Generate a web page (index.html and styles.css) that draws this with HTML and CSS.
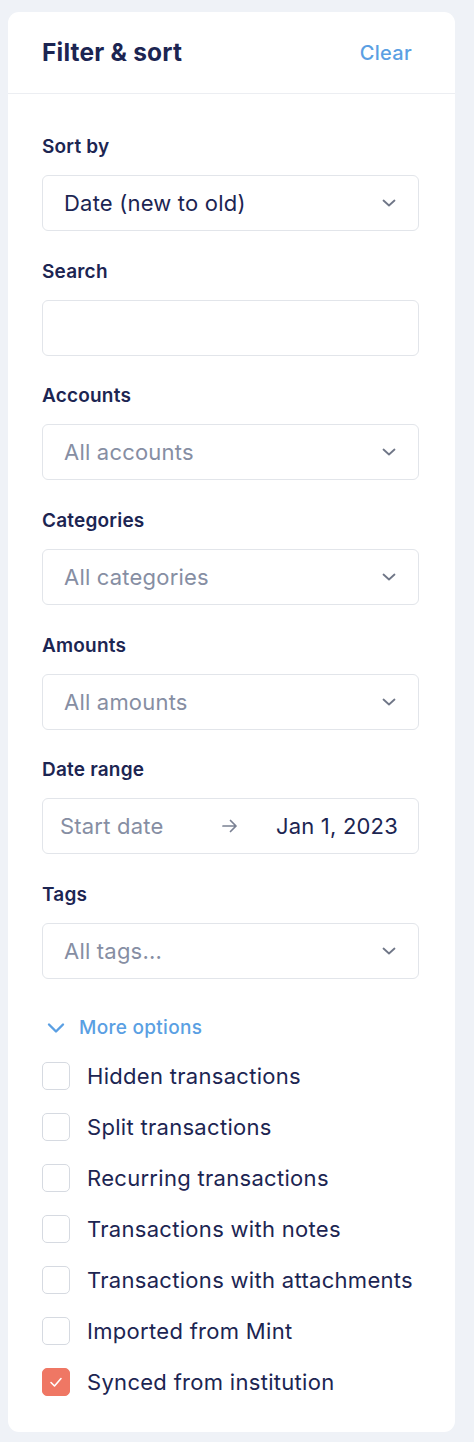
FILE: index.html
```html
<!DOCTYPE html>
<html>
<head>
<meta charset="utf-8">
<link rel="stylesheet" href="styles.css">
</head>
<body>
<div class="card">
  <div class="header">
    <div class="title">Filter &amp; sort</div>
    <div class="clear">Clear</div>
  </div>
  <div class="body">
    <div class="field">
      <div class="label">Sort by</div>
      <div class="box select"><span class="value">Date (new to old)</span><svg class="chev" width="14" height="8" viewBox="0 0 14 8"><path d="M1.5 1.5 L7 6.5 L12.5 1.5" fill="none" stroke="#6f7687" stroke-width="1.8" stroke-linecap="round" stroke-linejoin="round"/></svg></div>
    </div>
    <div class="field">
      <div class="label">Search</div>
      <div class="box"></div>
    </div>
    <div class="field">
      <div class="label">Accounts</div>
      <div class="box select"><span class="ph">All accounts</span><svg class="chev" width="14" height="8" viewBox="0 0 14 8"><path d="M1.5 1.5 L7 6.5 L12.5 1.5" fill="none" stroke="#6f7687" stroke-width="1.8" stroke-linecap="round" stroke-linejoin="round"/></svg></div>
    </div>
    <div class="field">
      <div class="label">Categories</div>
      <div class="box select"><span class="ph">All categories</span><svg class="chev" width="14" height="8" viewBox="0 0 14 8"><path d="M1.5 1.5 L7 6.5 L12.5 1.5" fill="none" stroke="#6f7687" stroke-width="1.8" stroke-linecap="round" stroke-linejoin="round"/></svg></div>
    </div>
    <div class="field">
      <div class="label">Amounts</div>
      <div class="box select"><span class="ph">All amounts</span><svg class="chev" width="14" height="8" viewBox="0 0 14 8"><path d="M1.5 1.5 L7 6.5 L12.5 1.5" fill="none" stroke="#6f7687" stroke-width="1.8" stroke-linecap="round" stroke-linejoin="round"/></svg></div>
    </div>
    <div class="field">
      <div class="label">Date range</div>
      <div class="box daterange"><span class="ph start">Start date</span><svg class="arrow" width="18" height="14" viewBox="0 0 18 14"><path d="M2 7 H15 M9.5 1.5 L15 7 L9.5 12.5" fill="none" stroke="#7a8193" stroke-width="1.7" stroke-linecap="round" stroke-linejoin="round"/></svg><span class="value end">Jan 1, 2023</span></div>
    </div>
    <div class="field">
      <div class="label">Tags</div>
      <div class="box select"><span class="ph">All tags...</span><svg class="chev" width="14" height="8" viewBox="0 0 14 8"><path d="M1.5 1.5 L7 6.5 L12.5 1.5" fill="none" stroke="#6f7687" stroke-width="1.8" stroke-linecap="round" stroke-linejoin="round"/></svg></div>
    </div>
    <div class="more"><svg width="18" height="12" viewBox="0 0 18 12"><path d="M2 2.5 L9 9.5 L16 2.5" fill="none" stroke="#5a9fe3" stroke-width="2.4" stroke-linecap="round" stroke-linejoin="round"/></svg><span>More options</span></div>
    <div class="checks">
      <div class="check"><span class="cb"></span><span>Hidden transactions</span></div>
      <div class="check"><span class="cb"></span><span>Split transactions</span></div>
      <div class="check"><span class="cb"></span><span>Recurring transactions</span></div>
      <div class="check"><span class="cb"></span><span>Transactions with notes</span></div>
      <div class="check"><span class="cb"></span><span>Transactions with attachments</span></div>
      <div class="check"><span class="cb"></span><span>Imported from Mint</span></div>
      <div class="check"><span class="cb on"><svg width="14" height="12" viewBox="0 0 14 12"><path d="M2 6.5 L5.5 10 L12 2.5" fill="none" stroke="#fff" stroke-width="1.6" stroke-linecap="round" stroke-linejoin="round"/></svg></span><span>Synced from institution</span></div>
    </div>
  </div>
</div>
</body>
</html>
```

FILE: styles.css
```css
html, body {
  margin: 0;
  padding: 0;
  background: #eff2f7;
}
body {
  font-family: Inter, "Noto Sans", sans-serif;
  color: #1c2552;
  padding: 12px 0 10px 8px;
  height: 1442px;
  box-sizing: border-box;
}
.card {
  width: 447px;
  height: 1420px;
  background: #fff;
  border-radius: 11px;
  box-sizing: border-box;
}
.header {
  height: 82px;
  border-bottom: 1px solid #eceef2;
  display: flex;
  align-items: center;
  justify-content: space-between;
  padding: 0 43px 0 34px;
  box-sizing: border-box;
}
.title {
  font-size: 24.5px;
  font-weight: 700;
  letter-spacing: 0.2px;
  padding-bottom: 2px;
}
.clear {
  font-size: 20px;
  font-weight: 500;
  letter-spacing: 0.3px;
  color: #5b9fe3;
}
.body {
  padding: 41px 36px 0 34px;
}
.field {
  margin-bottom: 28.7px;
}
.label {
  font-size: 19px;
  font-weight: 600;
  line-height: 24px;
  letter-spacing: 0.2px;
  margin-bottom: 16px;
}
.box {
  height: 56px;
  border: 1px solid #e2e5ea;
  border-radius: 6px;
  box-sizing: border-box;
  display: flex;
  align-items: center;
  padding: 0 22px 0 21px;
  font-size: 22px;
  letter-spacing: 0.2px;
}
.select {
  justify-content: space-between;
}
.value {
  color: #1c2552;
}
.ph {
  color: #868ea3;
}
.daterange {
  padding: 0 20px 0 17px;
}
.start {
  flex: 1;
}
.arrow {
  margin-right: 37px;
}
.more {
  display: flex;
  align-items: center;
  gap: 14px;
  padding-top: 4px;
  height: 32px;
  padding-left: 5px;
  font-size: 19px;
  font-weight: 500;
  letter-spacing: 0.3px;
  color: #5a9fe3;
}
.checks {
  margin-top: 18px;
  display: flex;
  flex-direction: column;
  gap: 23px;
}
.check {
  display: flex;
  align-items: center;
  gap: 17px;
  font-size: 22px;
  letter-spacing: 0.3px;
  height: 28px;
}
.cb {
  width: 28px;
  height: 28px;
  border: 1.5px solid #d6dae1;
  border-radius: 5px;
  box-sizing: border-box;
  flex: none;
  display: flex;
  align-items: center;
  justify-content: center;
}
.cb.on {
  background: #ef7764;
  border-color: #ef7764;
}
```
